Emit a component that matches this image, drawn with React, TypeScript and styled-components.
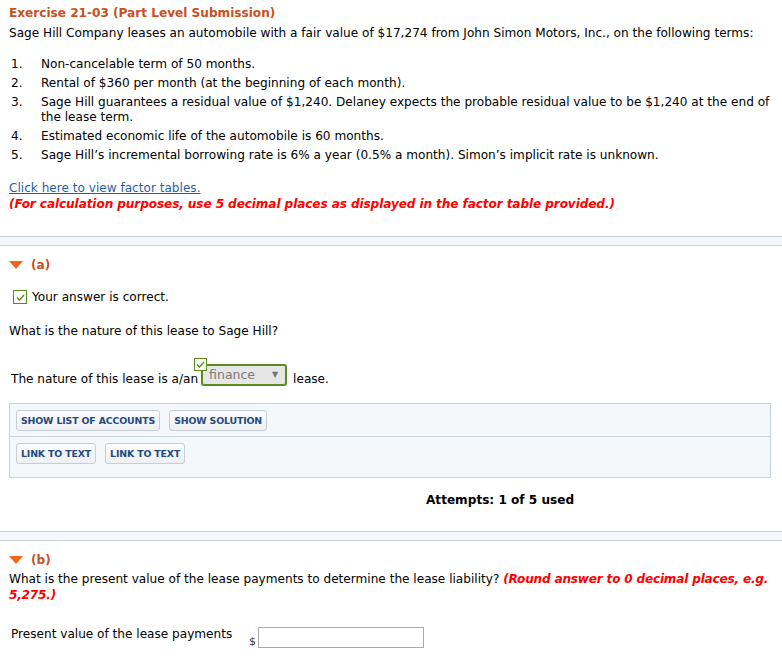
import React from "react";
import styled, { createGlobalStyle } from "styled-components";

const GlobalStyle = createGlobalStyle`
  body {
    margin: 0;
    background: #fff;
    font-family: Verdana, "DejaVu Sans", sans-serif;
    font-size: 12.1px;
    color: #000;
  }
`;

const Page = styled.div`
  width: 782px;
  padding-top: 5px;
`;

const Inner = styled.div`
  padding: 0 11px 0 9px;
`;

const Title = styled.div`
  font-weight: bold;
  color: #c8501c;
  line-height: 16px;
`;

const Para = styled.p`
  margin: 4px 0 0;
  line-height: 16px;
`;

const List = styled.ol`
  list-style: none;
  margin: 16px 0 0;
  padding: 0;
`;

const Item = styled.li`
  display: flex;
  line-height: 15px;
  margin-bottom: 4px;
`;

const Num = styled.span`
  width: 30px;
  flex-shrink: 0;
  padding-left: 2px;
`;

const Link = styled.a`
  display: inline-block;
  margin-top: 14px;
  color: #1f5fa0;
  text-decoration: underline;
  line-height: 15px;
`;

const Note = styled.div`
  color: #f00;
  font-weight: bold;
  font-style: italic;
  letter-spacing: -0.1px;
  line-height: 16px;
`;

const Band = styled.div<{ $top: number }>`
  margin-top: ${(p) => p.$top}px;
  height: 8px;
  background: #f4f7fa;
  border-top: 1px solid #c9d4df;
  border-bottom: 1px solid #c9d4df;
`;

const PartHead = styled.div<{ $top: number }>`
  display: flex;
  align-items: center;
  gap: 8px;
  margin-top: ${(p) => p.$top}px;
  color: #c8501c;
  font-weight: bold;
  line-height: 16px;
`;

const Triangle = styled.span`
  width: 0;
  height: 0;
  border-left: 7px solid transparent;
  border-right: 7px solid transparent;
  border-top: 8px solid #f2661a;
`;

const Correct = styled.div`
  display: flex;
  align-items: center;
  gap: 5px;
  margin-top: 16px;
  padding-left: 4px;
  line-height: 16px;
`;

const CheckBox = styled.span<{ $size: number }>`
  width: ${(p) => p.$size}px;
  height: ${(p) => p.$size}px;
  box-sizing: border-box;
  border: 1px solid #5a8c1c;
  background: #fff;
  display: inline-flex;
  align-items: center;
  justify-content: center;
  flex-shrink: 0;
`;

const Question = styled.p`
  margin: 18px 0 0;
  line-height: 16px;
`;

const AnswerRow = styled.div`
  display: flex;
  align-items: flex-end;
  margin-top: 25px;
  padding-left: 2px;
  line-height: 16px;
`;

const SelectWrap = styled.span`
  position: relative;
  margin: 0 6px 1px 3px;
`;

const SelectMark = styled.span`
  position: absolute;
  left: -7px;
  top: -8px;
`;

const FakeSelect = styled.span`
  display: inline-flex;
  align-items: flex-start;
  justify-content: space-between;
  box-sizing: border-box;
  width: 86px;
  height: 22px;
  padding: 1px 7px 0 6px;
  border: 2px solid #5a8c1c;
  border-radius: 3px;
  background: #e6e6e6;
  color: #7a7a7a;
  font-size: 12.5px;
  line-height: 15px;
`;

const Arrow = styled.span`
  font-size: 8px;
  color: #777;
`;

const Panel = styled.div`
  margin-top: 16px;
  border: 1px solid #c9d4df;
  background: #f5f8fb;
`;

const PanelRow = styled.div<{ $last?: boolean }>`
  display: flex;
  gap: 9px;
  padding: 6px 6px ${(p) => (p.$last ? 13 : 5)}px;
  border-top: ${(p) => (p.$last ? "1px solid #c9d4df" : "none")};
`;

const Btn = styled.button`
  height: 21px;
  padding: 0 4px;
  font-family: Verdana, "DejaVu Sans", sans-serif;
  font-size: 9.4px;
  font-weight: bold;
  letter-spacing: -0.15px;
  color: #244a7e;
  background: linear-gradient(#fdfdfe, #edf0f4);
  border: 1px solid #c6ced8;
  border-radius: 3px;
  line-height: 19px;
`;

const Attempts = styled.div`
  margin-top: 14px;
  padding-left: 417px;
  font-weight: bold;
  line-height: 16px;
`;

const QuestionB = styled.p`
  margin: 3px 0 0;
  line-height: 16px;
`;

const RedInline = styled.span`
  color: #f00;
  font-weight: bold;
  font-style: italic;
  letter-spacing: -0.2px;
`;

const FieldRow = styled.div`
  display: flex;
  align-items: flex-start;
  margin-top: 23px;
  padding-left: 2px;
  line-height: 16px;
`;

const FieldLabel = styled.span`
  width: 238px;
`;

const Dollar = styled.span`
  margin-top: 9px;
  width: 9px;
  font-size: 11px;
  line-height: 14px;
  color: #333;
`;

const Input = styled.input`
  width: 166px;
  height: 21px;
  box-sizing: border-box;
  border: 1px solid #a9a9a9;
  margin: 1px 0 0;
`;

const Tick = () => (
  <svg width="9" height="7" viewBox="0 0 9 7">
    <path d="M1 3.5 L3.5 6 L8 1" fill="none" stroke="#5a8c1c" strokeWidth="1.4" />
  </svg>
);

const terms = [
  "Non-cancelable term of 50 months.",
  "Rental of $360 per month (at the beginning of each month).",
  "Sage Hill guarantees a residual value of $1,240. Delaney expects the probable residual value to be $1,240 at the end of the lease term.",
  "Estimated economic life of the automobile is 60 months.",
  "Sage Hill’s incremental borrowing rate is 6% a year (0.5% a month). Simon’s implicit rate is unknown.",
];

export default function App() {
  return (
    <Page>
      <GlobalStyle />
      <Inner>
        <Title>Exercise 21-03 (Part Level Submission)</Title>
        <Para>
          Sage Hill Company leases an automobile with a fair value of $17,274 from John Simon Motors, Inc., on the
          following terms:
        </Para>
        <List>
          {terms.map((t, i) => (
            <Item key={i}>
              <Num>{i + 1}.</Num>
              <span>{t}</span>
            </Item>
          ))}
        </List>
        <Link href="#">Click here to view factor tables.</Link>
        <Note>(For calculation purposes, use 5 decimal places as displayed in the factor table provided.)</Note>
      </Inner>
      <Band $top={24} />
      <Inner>
        <PartHead $top={11}>
          <Triangle />
          (a)
        </PartHead>
        <Correct>
          <CheckBox $size={14}>
            <Tick />
          </CheckBox>
          Your answer is correct.
        </Correct>
        <Question>What is the nature of this lease to Sage Hill?</Question>
        <AnswerRow>
          The nature of this lease is a/an
          <SelectWrap>
            <SelectMark>
              <CheckBox $size={13}>
                <Tick />
              </CheckBox>
            </SelectMark>
            <FakeSelect>
              finance
              <Arrow>▼</Arrow>
            </FakeSelect>
          </SelectWrap>
          lease.
        </AnswerRow>
        <Panel>
          <PanelRow>
            <Btn>SHOW LIST OF ACCOUNTS</Btn>
            <Btn>SHOW SOLUTION</Btn>
          </PanelRow>
          <PanelRow $last>
            <Btn>LINK TO TEXT</Btn>
            <Btn>LINK TO TEXT</Btn>
          </PanelRow>
        </Panel>
        <Attempts>Attempts: 1 of 5 used</Attempts>
      </Inner>
      <Band $top={23} />
      <Inner>
        <PartHead $top={11}>
          <Triangle />
          (b)
        </PartHead>
        <QuestionB>
          What is the present value of the lease payments to determine the lease liability?{" "}
          <RedInline>(Round answer to 0 decimal places, e.g. 5,275.)</RedInline>
        </QuestionB>
        <FieldRow>
          <FieldLabel>Present value of the lease payments</FieldLabel>
          <Dollar>$</Dollar>
          <Input />
        </FieldRow>
      </Inner>
      <Band $top={19} />
    </Page>
  );
}
